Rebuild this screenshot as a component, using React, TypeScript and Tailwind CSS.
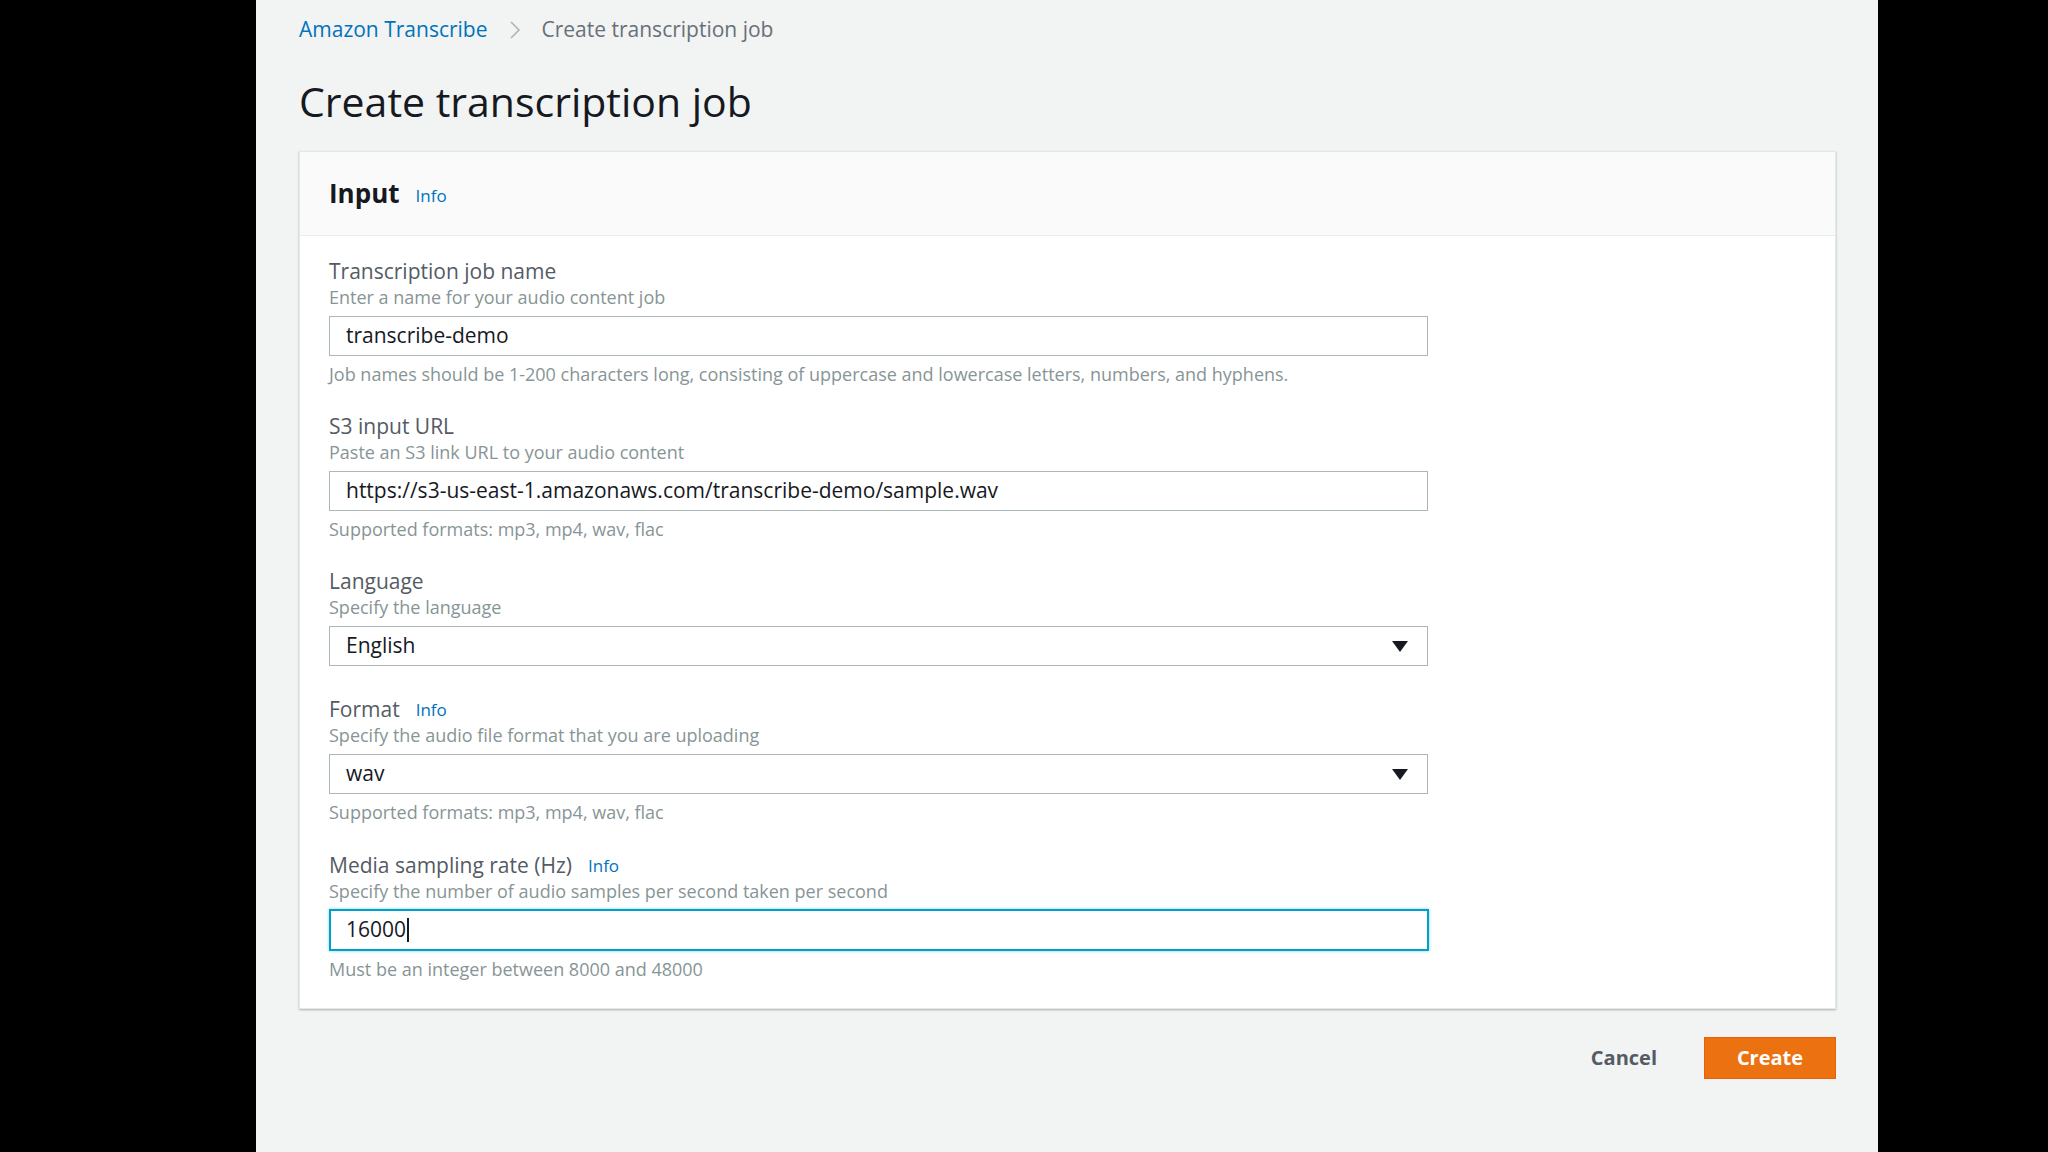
import React from "react";

const font = { fontFamily: '"Open Sans", "Noto Sans", Arial, sans-serif' };

function Info() {
  return <span className="text-[17px] leading-[22px] text-[#0073bb] ml-4 mt-[2px]">Info</span>;
}

function Caret() {
  return (
    <svg width="18" height="13" viewBox="0 0 18 13" className="shrink-0">
      <polygon points="1,1 17,1 9,12" fill="#16191f" />
    </svg>
  );
}

function Field({
  label,
  info,
  desc,
  value,
  select,
  constraint,
  focused,
  gapBelow,
}: {
  label: string;
  info?: boolean;
  desc: string;
  value: string;
  select?: boolean;
  constraint?: string;
  focused?: boolean;
  gapBelow: string;
}) {
  return (
    <div className={gapBelow}>
      <div className="flex items-center h-[26px]">
        <span className="text-[21px] leading-[26px] text-[#545b64]">{label}</span>
        {info && <Info />}
      </div>
      <div className="mt-[2px] text-[18px] leading-[22px] text-[#879596]">{desc}</div>
      {focused ? (
        <div className="mt-[7px] h-[42px] w-[1100px] border-2 border-[#00a1c9] bg-white flex items-center pl-[15px] shadow-[0_0_3px_rgba(0,161,201,0.5)]">
          <span className="text-[21px] text-[#16191f]">{value}</span>
          <span className="w-[1.5px] h-[24px] bg-[#16191f] ml-[1px]" />
        </div>
      ) : (
        <div className="mt-[8px] h-[40px] w-[1099px] border border-[#aab7b8] bg-white flex items-center justify-between pl-[16px] pr-[18px]">
          <span className="text-[21px] text-[#16191f]">{value}</span>
          {select && <Caret />}
        </div>
      )}
      {constraint && (
        <div className="mt-[7px] text-[18px] leading-[22px] text-[#879596]">{constraint}</div>
      )}
    </div>
  );
}

export default function App() {
  return (
    <div className="w-[2048px] h-[1152px] flex bg-black overflow-hidden" style={font}>
      <div className="w-[256px] bg-black shrink-0" />
      <div className="w-[1622px] bg-[#f2f3f3] pl-[43px] pr-[42px] pt-[16px]">
        <div className="flex items-center h-[28px] text-[21px]">
          <span className="text-[#0073bb]">Amazon Transcribe</span>
          <svg width="14" height="22" viewBox="0 0 14 22" className="mx-[20px]">
            <polyline points="3,3 11,11 3,19" fill="none" stroke="#aab7b8" strokeWidth="1.6" />
          </svg>
          <span className="text-[#687078]">Create transcription job</span>
        </div>
        <h1 className="mt-[33px] text-[41px] leading-[48px] text-[#16191f] font-normal">
          Create transcription job
        </h1>
        <div className="mt-[26px] bg-white border border-[#e5e8e8] shadow-[0_1px_2px_rgba(0,28,36,0.3)]">
          <div className="h-[84px] bg-[#fafafa] border-b border-[#eaeded] flex items-center px-[29px]">
            <span className="text-[26px] font-bold text-[#16191f]">Input</span>
            <span className="text-[17px] text-[#0073bb] ml-[16px] mt-[4px]">Info</span>
          </div>
          <div className="px-[29px] pt-[22px] pb-[28px]">
            <Field
              label="Transcription job name"
              desc="Enter a name for your audio content job"
              value="transcribe-demo"
              constraint="Job names should be 1-200 characters long, consisting of uppercase and lowercase letters, numbers, and hyphens."
              gapBelow="mb-[28px]"
            />
            <Field
              label="S3 input URL"
              desc="Paste an S3 link URL to your audio content"
              value="https://s3-us-east-1.amazonaws.com/transcribe-demo/sample.wav"
              constraint="Supported formats: mp3, mp4, wav, flac"
              gapBelow="mb-[28px]"
            />
            <Field
              label="Language"
              desc="Specify the language"
              value="English"
              select
              gapBelow="mb-[30px]"
            />
            <Field
              label="Format"
              info
              desc="Specify the audio file format that you are uploading"
              value="wav"
              select
              constraint="Supported formats: mp3, mp4, wav, flac"
              gapBelow="mb-[29px]"
            />
            <Field
              label="Media sampling rate (Hz)"
              info
              desc="Specify the number of audio samples per second taken per second"
              value="16000"
              focused
              constraint="Must be an integer between 8000 and 48000"
              gapBelow=""
            />
          </div>
        </div>
        <div className="mt-[28px] flex justify-end items-center">
          <span className="text-[20px] font-bold text-[#545b64] mr-[47px]">Cancel</span>
          <div className="w-[132px] h-[42px] bg-[#ec7211] border border-[#eb5f07] flex items-center justify-center text-[20px] font-bold text-white">
            Create
          </div>
        </div>
      </div>
      <div className="flex-1 bg-black" />
    </div>
  );
}
